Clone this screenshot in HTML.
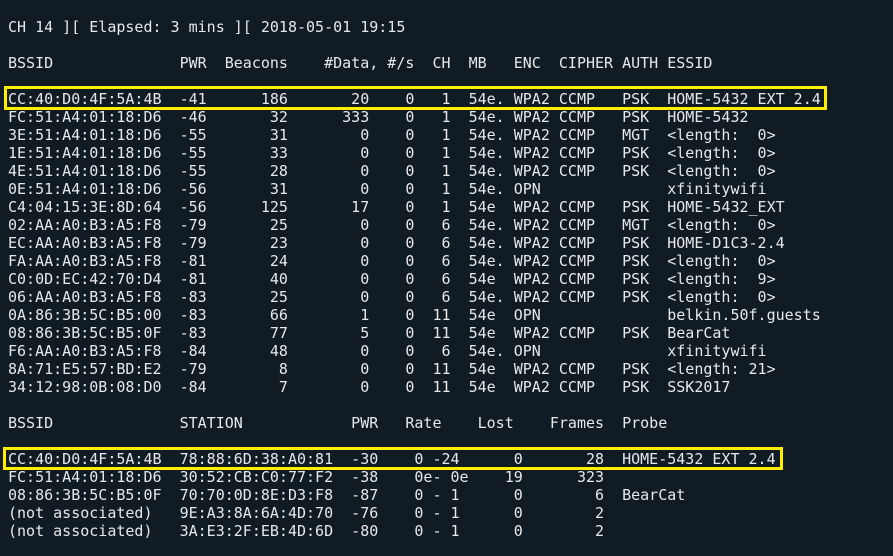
<!DOCTYPE html>
<html><head><meta charset="utf-8"><style>
html,body{margin:0;padding:0;background:#101b23;width:893px;height:556px;overflow:hidden}
pre{position:absolute;left:8px;top:18px;margin:0;font-family:"DejaVu Sans Mono","Liberation Mono",monospace;font-size:15px;line-height:18px;color:#e6e8ea;white-space:pre}
.box{position:absolute;border:3px solid #ffee00;box-sizing:border-box}
</style></head><body>
<div class="box" style="left:4px;top:86px;width:823px;height:24px"></div>
<div class="box" style="left:3px;top:447px;width:780px;height:23px"></div>
<pre>CH 14 ][ Elapsed: 3 mins ][ 2018-05-01 19:15

BSSID              PWR  Beacons    #Data, #/s  CH  MB   ENC  CIPHER AUTH ESSID

CC:40:D0:4F:5A:4B  -41      186       20    0   1  54e. WPA2 CCMP   PSK  HOME-5432 EXT 2.4
FC:51:A4:01:18:D6  -46       32      333    0   1  54e. WPA2 CCMP   PSK  HOME-5432
3E:51:A4:01:18:D6  -55       31        0    0   1  54e. WPA2 CCMP   MGT  &lt;length:  0&gt;
1E:51:A4:01:18:D6  -55       33        0    0   1  54e. WPA2 CCMP   PSK  &lt;length:  0&gt;
4E:51:A4:01:18:D6  -55       28        0    0   1  54e. WPA2 CCMP   PSK  &lt;length:  0&gt;
0E:51:A4:01:18:D6  -56       31        0    0   1  54e. OPN              xfinitywifi
C4:04:15:3E:8D:64  -56      125       17    0   1  54e  WPA2 CCMP   PSK  HOME-5432_EXT
02:AA:A0:B3:A5:F8  -79       25        0    0   6  54e. WPA2 CCMP   MGT  &lt;length:  0&gt;
EC:AA:A0:B3:A5:F8  -79       23        0    0   6  54e. WPA2 CCMP   PSK  HOME-D1C3-2.4
FA:AA:A0:B3:A5:F8  -81       24        0    0   6  54e. WPA2 CCMP   PSK  &lt;length:  0&gt;
C0:0D:EC:42:70:D4  -81       40        0    0   6  54e  WPA2 CCMP   PSK  &lt;length:  9&gt;
06:AA:A0:B3:A5:F8  -83       25        0    0   6  54e. WPA2 CCMP   PSK  &lt;length:  0&gt;
0A:86:3B:5C:B5:00  -83       66        1    0  11  54e  OPN              belkin.50f.guests
08:86:3B:5C:B5:0F  -83       77        5    0  11  54e  WPA2 CCMP   PSK  BearCat
F6:AA:A0:B3:A5:F8  -84       48        0    0   6  54e. OPN              xfinitywifi
8A:71:E5:57:BD:E2  -79        8        0    0  11  54e  WPA2 CCMP   PSK  &lt;length: 21&gt;
34:12:98:0B:08:D0  -84        7        0    0  11  54e  WPA2 CCMP   PSK  SSK2017

BSSID              STATION            PWR   Rate    Lost    Frames  Probe

CC:40:D0:4F:5A:4B  78:88:6D:38:A0:81  -30    0 -24      0       28  HOME-5432 EXT 2.4
FC:51:A4:01:18:D6  30:52:CB:C0:77:F2  -38    0e- 0e    19      323
08:86:3B:5C:B5:0F  70:70:0D:8E:D3:F8  -87    0 - 1      0        6  BearCat
(not associated)   9E:A3:8A:6A:4D:70  -76    0 - 1      0        2
(not associated)   3A:E3:2F:EB:4D:6D  -80    0 - 1      0        2</pre>
</body></html>
